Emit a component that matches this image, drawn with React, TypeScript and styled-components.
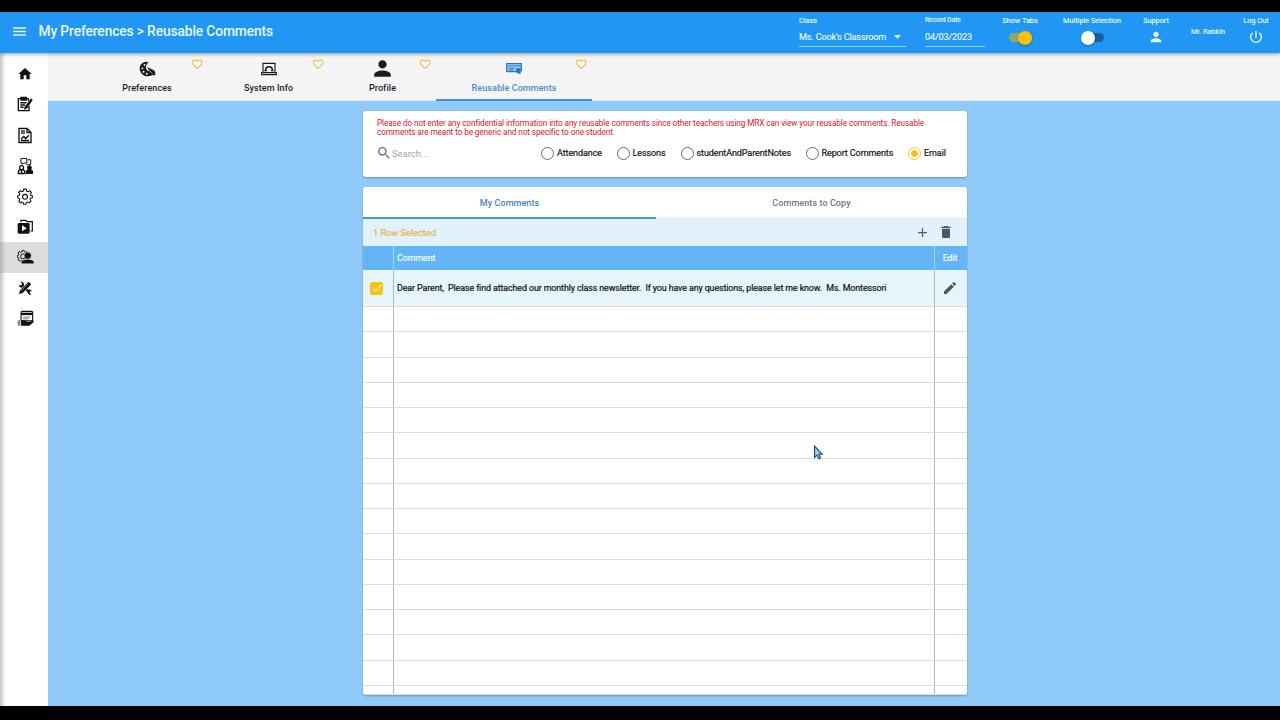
import React from "react";
import styled, { createGlobalStyle, css } from "styled-components";
import {
  MdAdd, MdArrowDropDown, MdCheck, MdDelete, MdEdit, MdFavoriteBorder, MdHome,
  MdMenu, MdPerson, MdPowerSettingsNew, MdSearch,
} from "react-icons/md";

const GlobalStyle = createGlobalStyle`
  * { box-sizing: border-box; }
  body { margin: 0; background: #000; font-family: Roboto, sans-serif; }
`;

const Screen = styled.div`
  width: 1280px;
  height: 720px;
  padding: 12px 0 14px;
  background: #000;
  display: flex;
  flex-direction: column;
  overflow: hidden;
  position: relative;
`;

const Header = styled.header`
  height: 41px;
  flex: none;
  display: flex;
  background: #2196f3;
  color: #e6f8ff;
  position: relative;
  z-index: 2;
  box-shadow: 0 1px 4px rgba(0, 0, 0, 0.4);
`;

const MenuButton = styled.div`
  width: 38px;
  padding: 11px 0 0 11px;
  svg { display: block; }
`;

const Title = styled.h1`
  margin: 0;
  width: 761px;
  font-size: 13.8px;
  font-weight: 500;
  line-height: 39px;
  letter-spacing: -0.13px;
  padding-left: 0.5px;
`;

const Field = styled.div<{ $width: number; $gap: number }>`
  width: ${(p) => p.$width}px;
  margin-right: ${(p) => p.$gap}px;
  height: 35px;
  border-bottom: 1px solid #8fd0ff;
`;

const FieldLabel = styled.div<{ $size: number }>`
  font-size: ${(p) => p.$size}px;
  line-height: 11px;
  padding-top: 3px;
  height: 15px;
  white-space: nowrap;
  -webkit-text-stroke: 0.15px currentColor;
`;

const FieldValue = styled.div`
  display: flex;
  justify-content: space-between;
  align-items: center;
  height: 19px;
  font-size: 9.1px;
  letter-spacing: -0.15px;
  white-space: nowrap;
  -webkit-text-stroke: 0.15px currentColor;
  svg { flex: none; }
`;

const Control = styled.div<{ $width: number }>`
  width: ${(p) => p.$width}px;
  flex: none;
  display: flex;
  flex-direction: column;
  align-items: center;
  font-size: 7.3px;
  white-space: nowrap;
  -webkit-text-stroke: 0.15px currentColor;
  svg { display: block; }
`;

const ControlLabel = styled.div`
  height: 17px;
  line-height: 11px;
  padding-top: 3px;
`;

const UserName = styled.div`
  line-height: 39px;
`;

const Switch = styled.div<{ $on?: boolean }>`
  width: 23px;
  height: 9px;
  margin-top: 4px;
  display: flex;
  align-items: center;
  justify-content: ${(p) => (p.$on ? "flex-end" : "flex-start")};
  background: ${(p) => (p.$on ? "#8eaa67" : "#16609f")};
  border-radius: 5px;
`;

const Knob = styled.span<{ $on?: boolean }>`
  width: 14px;
  height: 14px;
  flex: none;
  border-radius: 50%;
  background: ${(p) => (p.$on ? "#ffc107" : "#fff")};
  box-shadow: 0 1px 2px rgba(0, 0, 0, 0.35);
`;

const Body = styled.div`
  flex: 1;
  display: flex;
  min-height: 0;
`;

const Sidebar = styled.nav`
  width: 48px;
  flex: none;
  padding-top: 5.6px;
  background: linear-gradient(90deg, #c3c3c3 0, #f0f0f0 4px, #fff 7px);
`;

const SideItem = styled.div<{ $active?: boolean }>`
  height: 30.6px;
  display: flex;
  align-items: center;
  justify-content: center;
  padding-left: 2px;
  color: #111;
  ${(p) => p.$active && css`background: linear-gradient(90deg, #b5b5b5, #dcdcdc 6px);`}
  svg { display: block; }
`;

const Main = styled.main`
  flex: 1;
  display: flex;
  flex-direction: column;
  background: #90caf9;
  min-width: 0;
`;

const TabStrip = styled.div`
  height: 48px;
  flex: none;
  display: flex;
  padding-left: 38px;
  background: #f5f5f5;
  border-bottom: 1px solid #e3edf5;
`;

const Tab = styled.div<{ $width: number; $active?: boolean }>`
  width: ${(p) => p.$width}px;
  height: 48px;
  flex: none;
  position: relative;
  display: flex;
  flex-direction: column;
  align-items: center;
  color: ${(p) => (p.$active ? "#4a8ccb" : "#1c1c1c")};
  border-bottom: 2px solid ${(p) => (p.$active ? "#4192d9" : "transparent")};
`;

const TabIcon = styled.div`
  height: 28px;
  padding-top: 3px;
  display: flex;
  align-items: center;
`;

const TabLabel = styled.div`
  font-size: 9px;
  font-weight: 500;
  line-height: 14px;
  letter-spacing: 0.09px;
  white-space: nowrap;
`;

const Heart = styled.span`
  position: absolute;
  top: 5px;
  right: 5px;
  color: #efb63c;
  svg { display: block; }
`;

const Content = styled.div`
  width: 604px;
  margin: 10px 0 0 315px;
  display: flex;
  flex-direction: column;
  gap: 10px;
`;

const Card = styled.section<{ $height: number }>`
  height: ${(p) => p.$height}px;
  background: #fff;
  border-radius: 3px;
  box-shadow: 0 1px 2px rgba(90, 90, 90, 0.5);
  overflow: hidden;
`;

const Warning = styled.p`
  margin: 0;
  padding: 8px 14px 0;
  font-size: 8.2px;
  line-height: 9px;
  letter-spacing: -0.09px;
  color: #d5142b;
  white-space: nowrap;
`;

const FilterRow = styled.div`
  display: flex;
  align-items: center;
  height: 16px;
  margin-top: 8px;
  padding-left: 13px;
`;

const Search = styled.div`
  width: 165px;
  display: flex;
  align-items: center;
  font-size: 9.4px;
  color: #a3a3a3;
  svg { color: #707070; }
`;

const RadioOption = styled.label<{ $width: number }>`
  width: ${(p) => p.$width}px;
  display: flex;
  align-items: center;
  gap: 3px;
  font-size: 9px;
  letter-spacing: -0.09px;
  color: #161616;
  white-space: nowrap;
  -webkit-text-stroke: 0.2px currentColor;
`;

const RadioDot = styled.span<{ $on?: boolean }>`
  width: 13px;
  height: 13px;
  flex: none;
  border-radius: 50%;
  border: 1.3px solid ${(p) => (p.$on ? "#f2c52c" : "#6a6a6a")};
  background: ${(p) => (p.$on ? "radial-gradient(circle, #f2c11c 3px, #fff 3.7px)" : "#fff")};
`;

const PanelTabs = styled.div`
  display: flex;
  height: 32px;
`;

const PanelTab = styled.div<{ $active?: boolean }>`
  width: ${(p) => (p.$active ? 293 : 311)}px;
  text-align: center;
  font-size: 9px;
  font-weight: 500;
  line-height: 32px;
  letter-spacing: 0.08px;
  color: ${(p) => (p.$active ? "#3f83c4" : "#757575")};
  background: ${(p) => (p.$active ? "#fff" : "linear-gradient(#fff 30px, #e1f1fa 31px)")};
  border-bottom: ${(p) => (p.$active ? "2px solid #4596d3" : "0")};
`;

const Toolbar = styled.div`
  height: 27px;
  padding: 0 13px 1px 10px;
  display: flex;
  align-items: center;
  background: #e1f2fb;
  color: #4c5962;
  gap: 8px;
`;

const Selected = styled.span`
  flex: 1;
  font-size: 9.4px;
  letter-spacing: -0.09px;
  color: #e5ad38;
  -webkit-text-stroke: 0.1px currentColor;
`;

const GridRow = styled.div<{ $kind: "head" | "data" | "empty" }>`
  display: grid;
  grid-template-columns: 31px 541px 1fr;
  height: ${(p) => ({ head: 24, data: 37, empty: 25.28 })[p.$kind]}px;
  background: ${(p) => ({ head: "#64b5f6", data: "#e6f4fc", empty: "#fff" })[p.$kind]};
  color: ${(p) => (p.$kind === "head" ? "#f0fbff" : "#111")};
  font-size: 8.9px;
  letter-spacing: ${(p) => (p.$kind === "head" ? -0.08 : -0.104)}px;
  -webkit-text-stroke: 0.2px currentColor;
  border-bottom: ${(p) => (p.$kind === "head" ? "0" : "1px solid #d9dcde")};
`;

const Cell = styled.div<{ $head?: boolean; $last?: boolean }>`
  display: flex;
  align-items: center;
  justify-content: ${(p) => (p.$last ? "center" : "flex-start")};
  padding: ${(p) => (p.$last ? "0 2px 0 0" : "0 0 0 3px")};
  white-space: pre;
  border-right: ${(p) => (p.$last ? "0" : `1px solid ${p.$head ? "#a9d5f8" : "#b3b7ba"}`)};
`;

const Checkbox = styled.span`
  width: 13px;
  height: 13px;
  margin-left: 4px;
  border-radius: 2px;
  background: #f6c417;
  color: #fff7cf;
  display: flex;
  align-items: center;
  justify-content: center;
`;

const TableFoot = styled.div`
  height: 9px;
  display: grid;
  grid-template-columns: 31px 541px 1fr;
  border-bottom: 1px solid #dfe5e7;
`;

const Pointer = styled.svg`
  position: absolute;
  left: 813px;
  top: 445px;
`;

const ClipboardIcon = () => (
  <svg width="16" height="16" viewBox="0 0 24 24" fill="none" stroke="currentColor" strokeWidth="2">
    <path d="M6 4H2v18h16v-7" />
    <path d="M14 4h3v3" />
    <path d="M6 2h8v4H6z" fill="currentColor" />
    <path d="M5 10h9M5 13.5h7M5 17h5" strokeWidth="2.2" />
    <path d="M21 4 12 16l-1 4 4-2 8-12z" fill="currentColor" strokeWidth="1" />
  </svg>
);

const ReportIcon = () => (
  <svg width="16" height="17" viewBox="0 0 24 25" fill="none" stroke="currentColor" strokeWidth="2">
    <path d="M3 2h12l6 6v15H3z" />
    <path d="M15 2v6h6M6 6h6M6 9h6" />
    <path d="m6 18 4-4 3 3 5-5M6 20h12" />
  </svg>
);

const MeetingIcon = () => (
  <svg width="17" height="18" viewBox="0 0 26 27" fill="none" stroke="currentColor" strokeWidth="1.5">
    <path d="M6 2h9v7H10l-2 2V9H6zM16 4h5v7h-2v2l-2-2h-3" />
    <circle cx="7" cy="16" r="3" strokeWidth="2" />
    <path d="M2 25v-2c0-3 2-4 5-4s5 1 5 4v2zM7 20v4" strokeWidth="2" />
    <circle cx="19" cy="16" r="3" fill="currentColor" />
    <path d="M14 25v-2c0-3 2-4 5-4s5 1 5 4v2z" fill="currentColor" />
  </svg>
);

const gearPath =
  "M10 2h4l.6 3 2.2 1 2.6-1.7 2.7 2.8L20.4 9.7l.9 2.1 2.2.6v3.2l-2.6.6-1 2.1 1.5 2.5-2.8 2.7-2.6-1.6-2 .9-.6 2.7h-3.800l-.6-2.7-2-.9L5 23.5l-2.7-2.7 1.5-2.5-1-2.1L.5 15.6v-3.2l2.3-.6.9-2.1L2 7.100l2.700-2.800L7.300 6l2.100-1z";

const GearIcon = () => (
  <svg width="16" height="17" viewBox="-0.5 0.5 25 26" fill="none" stroke="currentColor" strokeWidth="1.7" strokeLinejoin="round">
    <path d={gearPath} />
    <circle cx="12" cy="14" r="3.8" />
  </svg>
);

const VideoFolderIcon = () => (
  <svg width="16" height="16" viewBox="0 0 24 24">
    <path d="M6 5V2h7l2 2h8v14h-3" fill="none" stroke="currentColor" strokeWidth="1.8" />
    <rect x="1" y="6" width="18" height="16" rx="2" fill="currentColor" />
    <path d="m7.500 9.500 7 4.500-7 4.500z" fill="#fff" />
  </svg>
);

const GearPersonIcon = () => (
  <svg width="17" height="15" viewBox="0 0 27 24">
    <g transform="translate(0 -1) scale(.8)" fill="none" stroke="currentColor" strokeWidth="2">
      <path d={gearPath} />
      <circle cx="12" cy="14" r="5" />
    </g>
    <circle cx="17" cy="9" r="5.8" fill="currentColor" stroke="#dcdcdc" strokeWidth="1" />
    <path d="M7 22v-2c0-4 5-5 10-5s10 1 10 5v2z" fill="currentColor" stroke="#dcdcdc" strokeWidth=".8" />
  </svg>
);

const ToolsIcon = () => (
  <svg width="14" height="14" viewBox="0 0 24 24">
    <path d="M1 6a5 5 0 0 0 7 5l8 8a5 5 0 0 0 7 4l-3-3 1-3 3 1a5 5 0 0 0-6-3L10 7a5 5 0 0 0-6-6l3 3-1 3-3 1z" fill="currentColor" />
    <path d="m1 23 2-7L17 2c2-2 7 3 5 5L8 21z" fill="currentColor" stroke="#fff" strokeWidth="1" />
    <path d="m5 17 12-12" stroke="#fff" strokeWidth=".8" />
  </svg>
);

const HandCardIcon = () => (
  <svg width="17" height="17" viewBox="0 0 25 25">
    <rect x="6" y="2" width="17" height="14" rx="1.5" fill="#fff" stroke="currentColor" strokeWidth="1.6" />
    <path d="M6 4h17v3.5H6z" fill="currentColor" />
    <path d="M9 10.5h11M9 13h8" stroke="#777" strokeWidth="1.4" />
    <path d="M1 15h4v8H1z" fill="#888" />
    <path d="M6 15h5l4 2.500h4l5-2.500c1 1 .5 2.500-1 4l-5 4H6z" fill="currentColor" />
  </svg>
);

const PaletteIcon = () => (
  <svg width="17" height="16" viewBox="0 0 25 24">
    <path d="M10 1C3 2 0 8 1 13c1 6 6 10 12 10 4 0 7-2 9-5l-8-3c-4-2-5-7-2-11l2-2z" fill="currentColor" />
    <path d="m12 9 10 5c3 2 3 6 1 8-2-1-4 0-6-2z" fill="currentColor" />
    <path d="m11 10 9 9" stroke="#f5f5f5" strokeWidth=".9" />
    <g fill="#f5f5f5">
      <circle cx="8" cy="6" r="1.4" /><circle cx="4.8" cy="11" r="1.4" />
      <circle cx="6.5" cy="16" r="1.5" /><circle cx="11.5" cy="19" r="1.5" />
    </g>
  </svg>
);

const LaptopIcon = () => (
  <svg width="16" height="14" viewBox="0 0 24 21" fill="none" stroke="currentColor" strokeWidth="1.7">
    <path d="M3 16V2h18v14M1 16h22v3H1z" />
    <path d="M7 13v-1c0-3 2-5 5-5s5 2 5 5v1" strokeWidth="2.2" />
    <path d="M5 13h4M15 13h4" />
  </svg>
);

const CommentsIcon = () => (
  <svg width="16" height="12" viewBox="0 0 24 18">
    <path d="M1 1h22v10h-2v4l-4-2H1z" fill="#a5d0f3" stroke="#2678c4" strokeWidth="1.8" />
    <path d="M2 4.500h20M4 8h9M4 10.500h7" stroke="#2678c4" strokeWidth="1.5" />
    <path d="M15 8h7v6l-3 2.500-4-3.500z" fill="#2678c4" />
  </svg>
);

const SIDE_ICONS = [
  <MdHome size={16} />, <ClipboardIcon />, <ReportIcon />, <MeetingIcon />, <GearIcon />,
  <VideoFolderIcon />, <GearPersonIcon />, <ToolsIcon />, <HandCardIcon />,
];

const TABS = [
  { label: "Preferences", width: 122, icon: <PaletteIcon /> },
  { label: "System Info", width: 121, icon: <LaptopIcon /> },
  { label: "Profile", width: 107, icon: <MdPerson size={25} /> },
  { label: "Reusable Comments", width: 156, icon: <CommentsIcon />, active: true },
];

const FILTERS = [
  { label: "Attendance", width: 75.5 },
  { label: "Lessons", width: 64 },
  { label: "studentAndParentNotes", width: 125 },
  { label: "Report Comments", width: 102.5 },
  { label: "Email", width: 50, on: true },
];

export default function App() {
  return (
    <Screen>
      <GlobalStyle />
      <Header>
        <MenuButton><MdMenu size={17} /></MenuButton>
        <Title>My Preferences &gt; Reusable Comments</Title>
        <Field $width={107} $gap={19}>
          <FieldLabel $size={7.3}>Class</FieldLabel>
          <FieldValue>Ms. Cook's Classroom<MdArrowDropDown size={17} /></FieldValue>
        </Field>
        <Field $width={60} $gap={8}>
          <FieldLabel $size={6.6}>Record Date</FieldLabel>
          <FieldValue>04/03/2023</FieldValue>
        </Field>
        <Control $width={54}>
          <ControlLabel>Show Tabs</ControlLabel>
          <Switch $on><Knob $on /></Switch>
        </Control>
        <Control $width={90}>
          <ControlLabel>Multiple Selection</ControlLabel>
          <Switch><Knob /></Switch>
        </Control>
        <Control $width={38}>
          <ControlLabel>Support</ControlLabel>
          <MdPerson size={16} />
        </Control>
        <Control $width={66}><UserName>Mr. Rabkin</UserName></Control>
        <Control $width={30}>
          <ControlLabel>Log Out</ControlLabel>
          <MdPowerSettingsNew size={16} />
        </Control>
      </Header>
      <Body>
        <Sidebar>
          {SIDE_ICONS.map((icon, i) => <SideItem key={i} $active={i === 6}>{icon}</SideItem>)}
        </Sidebar>
        <Main>
          <TabStrip>
            {TABS.map((t) => (
              <Tab key={t.label} $width={t.width} $active={t.active}>
                <TabIcon>{t.icon}</TabIcon>
                <TabLabel>{t.label}</TabLabel>
                <Heart><MdFavoriteBorder size={12.5} /></Heart>
              </Tab>
            ))}
          </TabStrip>
          <Content>
            <Card $height={66}>
              <Warning>
                Please do not enter any confidential information into any reusable comments since other teachers using MRX can view your reusable comments. Reusable
                <br />
                comments are meant to be generic and not specific to one student.
              </Warning>
              <FilterRow>
                <Search><MdSearch size={16} />Search...</Search>
                {FILTERS.map((f) => (
                  <RadioOption key={f.label} $width={f.width}>
                    <RadioDot $on={f.on} />{f.label}
                  </RadioOption>
                ))}
              </FilterRow>
            </Card>
            <Card $height={508}>
              <PanelTabs>
                <PanelTab $active>My Comments</PanelTab>
                <PanelTab>Comments to Copy</PanelTab>
              </PanelTabs>
              <Toolbar>
                <Selected>1 Row Selected</Selected>
                <MdAdd size={15} />
                <MdDelete size={16} />
              </Toolbar>
              <GridRow $kind="head">
                <Cell $head />
                <Cell $head>Comment</Cell>
                <Cell $head $last>Edit</Cell>
              </GridRow>
              <GridRow $kind="data">
                <Cell><Checkbox><MdCheck size={12} /></Checkbox></Cell>
                <Cell>{"Dear Parent,  Please find attached our monthly class newsletter.  If you have any questions, please let me know.  Ms. Montessori"}</Cell>
                <Cell $last><MdEdit size={16} color="#4c5962" /></Cell>
              </GridRow>
              {Array.from({ length: 15 }, (_, i) => (
                <GridRow key={i} $kind="empty"><Cell /><Cell /><Cell $last /></GridRow>
              ))}
              <TableFoot><Cell /><Cell /><Cell $last /></TableFoot>
            </Card>
          </Content>
        </Main>
      </Body>
      <Pointer width="10" height="15" viewBox="0 0 10 15">
        <path d="M1.500 1v11.500l2.500-2.300 1.700 3.500 1.900-.9L6 9.300h3.200z" fill="#9cc9ea" stroke="#1c4c70" strokeWidth="1.100" />
      </Pointer>
    </Screen>
  );
}
